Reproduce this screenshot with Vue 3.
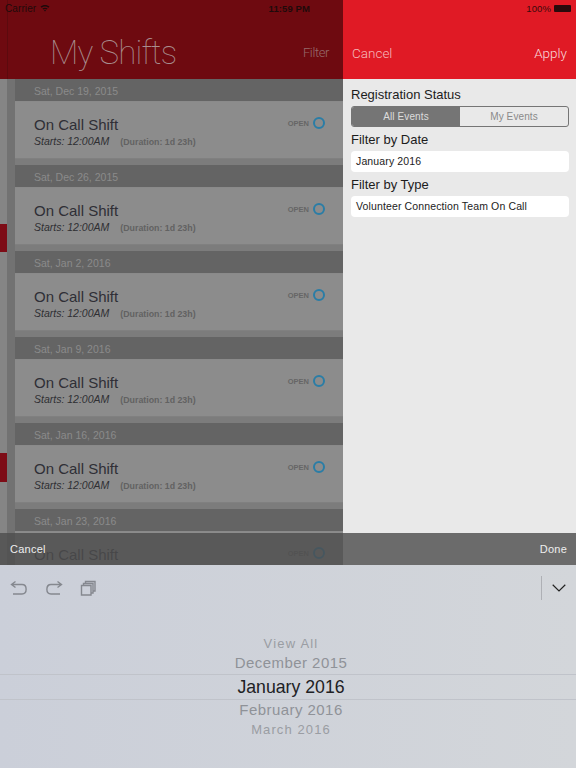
<template>
  <div class="screen">
    <div class="top">
      <section class="shifts">
        <header class="shifts-head">
          <div class="status dark">
            <span class="carrier">
              Carrier
              <svg class="wifi" width="10" height="8" viewBox="0 0 10 8">
                <path d="M0.5 2.6 C3 0.4 7 0.4 9.5 2.6 L8.4 3.8 C6.4 2.2 3.6 2.2 1.6 3.8 Z" />
                <path d="M2.4 4.6 C3.9 3.4 6.1 3.4 7.6 4.6 L6.6 5.6 C5.6 4.9 4.4 4.9 3.4 5.6 Z" />
                <path d="M4 6.4 C4.6 6 5.4 6 6 6.4 L5 7.6 Z" />
              </svg>
            </span>
            <span class="time">11:59 PM</span>
          </div>
          <div class="title-row">
            <h1>My Shifts</h1>
            <span class="filter-link">Filter</span>
          </div>
        </header>
        <div class="shifts-body">
          <div class="rail">
            <div class="rail-tab first"></div>
            <div class="rail-tab second"></div>
          </div>
          <div class="rail-inner"></div>
          <div class="list">
            <div v-for="day in days" :key="day" class="day">
              <div class="date">{{ day }}</div>
              <div class="card">
                <div class="card-main">
                  <div class="shift-name">On Call Shift</div>
                  <div class="shift-meta">
                    <span class="starts">Starts: 12:00AM</span>
                    <span class="duration">(Duration: 1d 23h)</span>
                  </div>
                </div>
                <div class="open">
                  <span>OPEN</span>
                  <i class="ring"></i>
                </div>
              </div>
            </div>
          </div>
        </div>
      </section>

      <aside class="filters">
        <header class="filters-head">
          <div class="status right">
            <span>100%</span>
            <span class="battery"></span>
          </div>
          <div class="action-row">
            <span class="cancel">Cancel</span>
            <span>Apply</span>
          </div>
        </header>
        <div class="filters-body">
          <label>Registration Status</label>
          <div class="segment">
            <div class="seg active">All Events</div>
            <div class="seg">My Events</div>
          </div>
          <label>Filter by Date</label>
          <div class="field">January 2016</div>
          <label>Filter by Type</label>
          <div class="field">Volunteer Connection Team On Call</div>
        </div>
      </aside>

      <div class="picker-bar">
        <span>Cancel</span>
        <span>Done</span>
      </div>
    </div>

    <div class="keyboard">
      <div class="tools">
        <svg width="18" height="16" viewBox="0 0 18 16" class="tool">
          <path d="M5.5 1.5 L1.5 4.5 L5.5 7.5 M2 4.5 H12 C17.5 4.5 17.5 14 12 14 H3" />
        </svg>
        <svg width="18" height="16" viewBox="0 0 18 16" class="tool">
          <path d="M12.5 1.5 L16.5 4.5 L12.5 7.5 M16 4.5 H6 C0.5 4.5 0.5 14 6 14 H15" />
        </svg>
        <svg width="16" height="16" viewBox="0 0 16 16" class="tool">
          <path d="M1.5 5.5 H11 V15 H1.5 Z M3.5 5.5 V3.5 H13 V13 H11 M5.5 3.5 V1.5 H15 V11 H13" />
        </svg>
        <div class="tools-right">
          <i class="divider"></i>
          <svg width="14" height="8" viewBox="0 0 14 8" class="chevron">
            <path d="M0.7 0.8 L7 7 L13.3 0.8" />
          </svg>
        </div>
      </div>
      <div class="wheel">
        <div class="opt far view-all">View All</div>
        <div class="opt near">December 2015</div>
        <div class="opt selected">January 2016</div>
        <div class="opt near after">February 2016</div>
        <div class="opt far">March 2016</div>
      </div>
    </div>
  </div>
</template>

<script setup>
const days = [
  'Sat, Dec 19, 2015',
  'Sat, Dec 26, 2015',
  'Sat, Jan 2, 2016',
  'Sat, Jan 9, 2016',
  'Sat, Jan 16, 2016',
  'Sat, Jan 23, 2016',
]
</script>

<style>
html,
body {
  margin: 0;
  background: #ccd0d9;
}
</style>

<style scoped>
.screen {
  width: 576px;
  height: 768px;
  overflow: hidden;
  display: flex;
  flex-direction: column;
  font-family: "Liberation Sans", Arial, sans-serif;
}

.top {
  position: relative;
  display: flex;
  height: 565px;
  flex-shrink: 0;
}

/* left, dimmed */
.shifts {
  width: 343px;
  flex-shrink: 0;
  display: flex;
  flex-direction: column;
  overflow: hidden;
  background: #7c7c7c;
}

.shifts-head {
  height: 79px;
  box-sizing: border-box;
  flex-shrink: 0;
  background: linear-gradient(to right, #6e0a10 7px, #5c0a0e 7px, #5c0a0e 8px, #6e0a10 8px);
}

.status {
  height: 16px;
  display: flex;
  align-items: center;
  justify-content: space-between;
  font-size: 10px;
  letter-spacing: 0.1px;
}

.status.dark {
  padding: 0 33px 0 5px;
  color: #1e0a0b;
}

.status.right {
  justify-content: flex-end;
  gap: 3px;
  padding-right: 5px;
  color: #3a0a0c;
  font-size: 9.5px;
}

.carrier {
  display: flex;
  align-items: center;
  gap: 4px;
}

.wifi {
  fill: #1e0a0b;
}

.time {
  font-weight: 700;
  font-size: 9.5px;
  letter-spacing: 0.1px;
}

.title-row {
  display: flex;
  align-items: center;
  justify-content: space-between;
  height: 42px;
  margin-top: 15px;
  padding: 0 14px 0 50px;
}

h1 {
  margin: 0;
  font-family: Roboto, sans-serif;
  font-weight: 100;
  font-size: 33px;
  letter-spacing: -0.8px;
  color: #a98e8f;
}

.filter-link {
  font-family: Roboto, sans-serif;
  font-weight: 300;
  font-size: 13px;
  letter-spacing: -0.4px;
  color: #966a6c;
}

.shifts-body {
  display: flex;
  flex: 1;
  min-height: 0;
}

.rail {
  width: 7px;
  flex-shrink: 0;
  background: #858585;
}

.rail-tab {
  height: 28px;
  background: #7d0c16;
}

.rail-tab.first {
  margin-top: 145px;
}

.rail-tab.second {
  height: 29px;
  margin-top: 201px;
}

.rail-inner {
  width: 8px;
  flex-shrink: 0;
  background: #727272;
}

.list {
  flex: 1;
  min-width: 0;
}

.day {
  height: 86px;
}

.date {
  height: 22px;
  padding-left: 19px;
  background: #646464;
  color: #8b8b8b;
  font-size: 10.5px;
  line-height: 25px;
  border-bottom: 1px solid #8a8a8a;
}

.card {
  height: 56px;
  display: flex;
  justify-content: space-between;
  background: #8c8c8c;
  border-bottom: 1px solid #808080;
}

.card-main {
  padding: 14px 0 0 19px;
}

.shift-name {
  font-size: 15px;
  line-height: 18px;
  color: #2f2f36;
}

.shift-meta {
  display: flex;
  align-items: baseline;
  gap: 11px;
  margin-top: 1px;
}

.starts {
  font-size: 10.5px;
  font-style: italic;
  color: #2f2f33;
}

.duration {
  font-size: 8.8px;
  font-weight: 700;
  color: #626262;
}

.open {
  display: flex;
  align-items: center;
  gap: 4px;
  height: 14px;
  margin: 14px 18px 0 0;
  font-size: 7.5px;
  font-weight: 700;
  color: #666;
}

.ring {
  width: 8px;
  height: 8px;
  border: 2px solid #2a7da6;
  border-radius: 50%;
}

/* right panel */
.filters {
  flex: 1;
  min-width: 0;
  background: #e9e9e9;
}

.filters-head {
  height: 79px;
  background: #e01a25;
}

.battery {
  width: 17px;
  height: 7px;
  background: #2a0a0c;
  border-radius: 1px;
}

.action-row {
  display: flex;
  justify-content: space-between;
  height: 42px;
  margin-top: 16px;
  align-items: center;
  padding: 0 9px 0 9px;
  font-family: Roboto, sans-serif;
  font-weight: 300;
  font-size: 13.5px;
  color: #f8dcdd;
}

.cancel {
  color: #f5b9bc;
}

.filters-body {
  padding: 7px 7px 0 8px;
}

label {
  display: block;
  height: 20px;
  line-height: 17px;
  font-size: 13px;
  color: #1c1c1c;
}

.segment {
  display: flex;
  height: 21px;
  box-sizing: border-box;
  margin-bottom: 4px;
  border: 1px solid #757575;
  border-radius: 3px;
  overflow: hidden;
  font-size: 10px;
  letter-spacing: 0.1px;
  color: #8a8a8a;
}

.seg {
  flex: 1;
  display: flex;
  align-items: center;
  justify-content: center;
}

.seg.active {
  background: #757575;
  color: #dcdcdc;
}

.field {
  height: 21px;
  margin-bottom: 4px;
  padding-left: 5px;
  background: #fff;
  border-radius: 4px;
  font-size: 10.5px;
  line-height: 21px;
  letter-spacing: 0.13px;
  color: #222;
}

.picker-bar {
  position: absolute;
  left: 0;
  right: 0;
  bottom: 0;
  height: 32px;
  display: flex;
  align-items: center;
  justify-content: space-between;
  padding: 0 9px 0 10px;
  background: rgba(78, 78, 78, 0.81);
  color: #eee;
  font-size: 11px;
  letter-spacing: 0.25px;
}

/* keyboard + picker */
.keyboard {
  flex: 1;
  background: linear-gradient(to right, #cbcfd9, #d3d6da);
}

.tools {
  display: flex;
  align-items: center;
  height: 46px;
  padding-left: 10px;
  gap: 17px;
}

.tool {
  fill: none;
  stroke: #85888f;
  stroke-width: 1.4;
}

.tools-right {
  margin-left: auto;
  display: flex;
  align-items: center;
  gap: 10px;
  padding-right: 10px;
}

.divider {
  width: 1px;
  height: 24px;
  background: #aeb0b5;
}

.chevron {
  fill: none;
  stroke: #222;
  stroke-width: 1.2;
}

.wheel {
  margin-top: 23px;
  display: flex;
  flex-direction: column;
  text-align: center;
  text-indent: 6px;
}

.opt {
  color: #8f9298;
}

.far {
  height: 20px;
  line-height: 20px;
  font-size: 13px;
  letter-spacing: 1.1px;
  color: #9a9da3;
}

.view-all {
  letter-spacing: 1.2px;
}

.near {
  height: 20px;
  line-height: 18px;
  font-size: 15px;
  letter-spacing: 0.45px;
}

.selected {
  height: 24px;
  line-height: 24px;
  font-size: 17.7px;
  color: #202124;
  border-top: 1px solid #c0c3ca;
  border-bottom: 1px solid #c0c3ca;
}

.after {
  line-height: 20px;
}
</style>
